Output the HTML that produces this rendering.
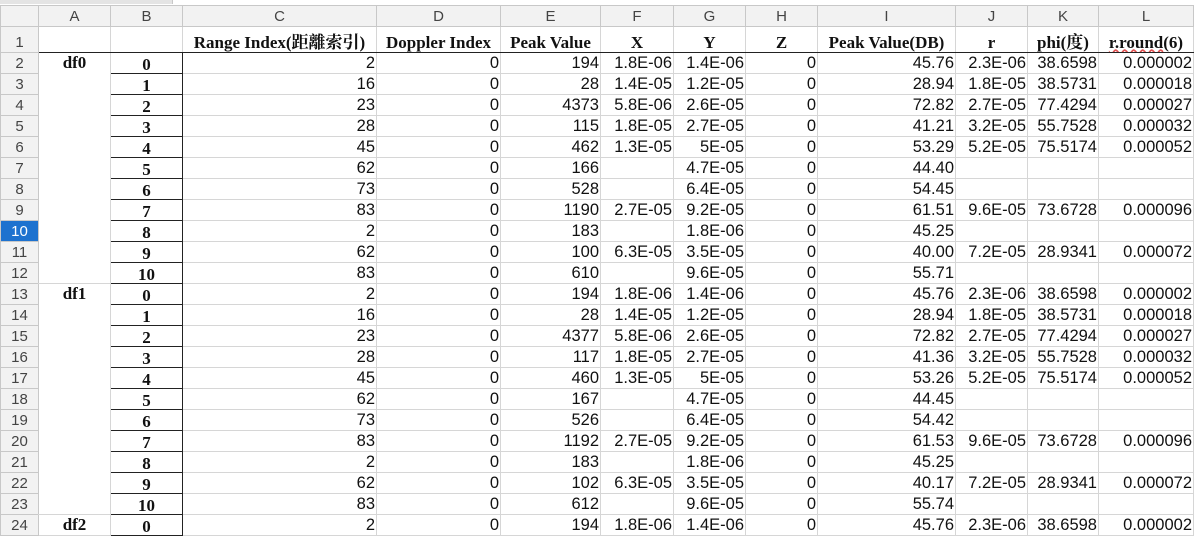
<!DOCTYPE html>
<html><head><meta charset="utf-8"><style>
body{margin:0;width:1200px;height:523px;overflow:hidden;background:#fff;font-family:"Liberation Sans","Noto Sans CJK TC",sans-serif;}
.top{position:absolute;left:0;top:0;width:1200px;height:5px;background:#fff}
.top i{position:absolute;left:0;top:0;width:172px;height:4px;background:#e4e4e4;border-right:1px solid #c8c8c8}
table{position:absolute;left:0;top:5px;border-collapse:collapse;table-layout:fixed;font-size:16.5px}
td{border:1px solid #d6d6d6;padding:0 1px;white-space:nowrap;overflow:hidden;text-align:right;vertical-align:bottom;height:20px;line-height:19px;color:#111}
tr.ch td{background:#f2f2f2;color:#444;text-align:center;vertical-align:middle;font-size:15px;height:20px;border-color:#c8c8c8}
td.rh{background:#f2f2f2;color:#444;text-align:center;font-size:15px;border-color:#c8c8c8;padding:0}
td.sel{background:#1d72cf;color:#fff}
tr.h1 td{height:25px;font-family:"Liberation Serif","Noto Serif CJK SC",serif;font-weight:bold;font-size:17px;text-align:center;border-bottom:1.5px solid #222}
tr.h1 td.rh{font-family:"Liberation Sans",sans-serif;font-weight:normal;font-size:15px;border-bottom:1px solid #c8c8c8}
td.b{font-family:"Liberation Serif",serif;font-weight:bold;text-align:center;border:1.5px solid #222;font-size:17px;line-height:17px}
td.a{font-family:"Liberation Serif",serif;font-weight:bold;text-align:center;vertical-align:top;border-top:1.5px solid #222;border-left:1px solid #c8c8c8;font-size:17px;line-height:20px}
</style></head><body>
<div class="top"><i></i></div>
<table>
<colgroup><col style="width:38px"><col style="width:72px"><col style="width:72px"><col style="width:194px"><col style="width:124px"><col style="width:100px"><col style="width:73px"><col style="width:72px"><col style="width:72px"><col style="width:138px"><col style="width:72px"><col style="width:71px"><col style="width:95px"></colgroup>
<tr class="ch"><td></td><td>A</td><td>B</td><td>C</td><td>D</td><td>E</td><td>F</td><td>G</td><td>H</td><td>I</td><td>J</td><td>K</td><td>L</td></tr>
<tr class="h1"><td class="rh">1</td><td></td><td></td><td>Range Index(距離索引)</td><td>Doppler Index</td><td>Peak Value</td><td>X</td><td>Y</td><td>Z</td><td>Peak Value(DB)</td><td>r</td><td>phi(度)</td><td><span style="text-decoration:underline wavy #e05050">r.round</span>(6)</td></tr>
<tr><td class="rh">2</td><td class="a" rowspan="11">df0</td><td class="b">0</td><td>2</td><td>0</td><td>194</td><td>1.8E-06</td><td>1.4E-06</td><td>0</td><td>45.76</td><td>2.3E-06</td><td>38.6598</td><td>0.000002</td></tr>
<tr><td class="rh">3</td><td class="b">1</td><td>16</td><td>0</td><td>28</td><td>1.4E-05</td><td>1.2E-05</td><td>0</td><td>28.94</td><td>1.8E-05</td><td>38.5731</td><td>0.000018</td></tr>
<tr><td class="rh">4</td><td class="b">2</td><td>23</td><td>0</td><td>4373</td><td>5.8E-06</td><td>2.6E-05</td><td>0</td><td>72.82</td><td>2.7E-05</td><td>77.4294</td><td>0.000027</td></tr>
<tr><td class="rh">5</td><td class="b">3</td><td>28</td><td>0</td><td>115</td><td>1.8E-05</td><td>2.7E-05</td><td>0</td><td>41.21</td><td>3.2E-05</td><td>55.7528</td><td>0.000032</td></tr>
<tr><td class="rh">6</td><td class="b">4</td><td>45</td><td>0</td><td>462</td><td>1.3E-05</td><td>5E-05</td><td>0</td><td>53.29</td><td>5.2E-05</td><td>75.5174</td><td>0.000052</td></tr>
<tr><td class="rh">7</td><td class="b">5</td><td>62</td><td>0</td><td>166</td><td></td><td>4.7E-05</td><td>0</td><td>44.40</td><td></td><td></td><td></td></tr>
<tr><td class="rh">8</td><td class="b">6</td><td>73</td><td>0</td><td>528</td><td></td><td>6.4E-05</td><td>0</td><td>54.45</td><td></td><td></td><td></td></tr>
<tr><td class="rh">9</td><td class="b">7</td><td>83</td><td>0</td><td>1190</td><td>2.7E-05</td><td>9.2E-05</td><td>0</td><td>61.51</td><td>9.6E-05</td><td>73.6728</td><td>0.000096</td></tr>
<tr><td class="rh sel">10</td><td class="b">8</td><td>2</td><td>0</td><td>183</td><td></td><td>1.8E-06</td><td>0</td><td>45.25</td><td></td><td></td><td></td></tr>
<tr><td class="rh">11</td><td class="b">9</td><td>62</td><td>0</td><td>100</td><td>6.3E-05</td><td>3.5E-05</td><td>0</td><td>40.00</td><td>7.2E-05</td><td>28.9341</td><td>0.000072</td></tr>
<tr><td class="rh">12</td><td class="b">10</td><td>83</td><td>0</td><td>610</td><td></td><td>9.6E-05</td><td>0</td><td>55.71</td><td></td><td></td><td></td></tr>
<tr><td class="rh">13</td><td class="a" rowspan="11">df1</td><td class="b">0</td><td>2</td><td>0</td><td>194</td><td>1.8E-06</td><td>1.4E-06</td><td>0</td><td>45.76</td><td>2.3E-06</td><td>38.6598</td><td>0.000002</td></tr>
<tr><td class="rh">14</td><td class="b">1</td><td>16</td><td>0</td><td>28</td><td>1.4E-05</td><td>1.2E-05</td><td>0</td><td>28.94</td><td>1.8E-05</td><td>38.5731</td><td>0.000018</td></tr>
<tr><td class="rh">15</td><td class="b">2</td><td>23</td><td>0</td><td>4377</td><td>5.8E-06</td><td>2.6E-05</td><td>0</td><td>72.82</td><td>2.7E-05</td><td>77.4294</td><td>0.000027</td></tr>
<tr><td class="rh">16</td><td class="b">3</td><td>28</td><td>0</td><td>117</td><td>1.8E-05</td><td>2.7E-05</td><td>0</td><td>41.36</td><td>3.2E-05</td><td>55.7528</td><td>0.000032</td></tr>
<tr><td class="rh">17</td><td class="b">4</td><td>45</td><td>0</td><td>460</td><td>1.3E-05</td><td>5E-05</td><td>0</td><td>53.26</td><td>5.2E-05</td><td>75.5174</td><td>0.000052</td></tr>
<tr><td class="rh">18</td><td class="b">5</td><td>62</td><td>0</td><td>167</td><td></td><td>4.7E-05</td><td>0</td><td>44.45</td><td></td><td></td><td></td></tr>
<tr><td class="rh">19</td><td class="b">6</td><td>73</td><td>0</td><td>526</td><td></td><td>6.4E-05</td><td>0</td><td>54.42</td><td></td><td></td><td></td></tr>
<tr><td class="rh">20</td><td class="b">7</td><td>83</td><td>0</td><td>1192</td><td>2.7E-05</td><td>9.2E-05</td><td>0</td><td>61.53</td><td>9.6E-05</td><td>73.6728</td><td>0.000096</td></tr>
<tr><td class="rh">21</td><td class="b">8</td><td>2</td><td>0</td><td>183</td><td></td><td>1.8E-06</td><td>0</td><td>45.25</td><td></td><td></td><td></td></tr>
<tr><td class="rh">22</td><td class="b">9</td><td>62</td><td>0</td><td>102</td><td>6.3E-05</td><td>3.5E-05</td><td>0</td><td>40.17</td><td>7.2E-05</td><td>28.9341</td><td>0.000072</td></tr>
<tr><td class="rh">23</td><td class="b">10</td><td>83</td><td>0</td><td>612</td><td></td><td>9.6E-05</td><td>0</td><td>55.74</td><td></td><td></td><td></td></tr>
<tr><td class="rh">24</td><td class="a">df2</td><td class="b">0</td><td>2</td><td>0</td><td>194</td><td>1.8E-06</td><td>1.4E-06</td><td>0</td><td>45.76</td><td>2.3E-06</td><td>38.6598</td><td>0.000002</td></tr>
</table>
</body></html>
